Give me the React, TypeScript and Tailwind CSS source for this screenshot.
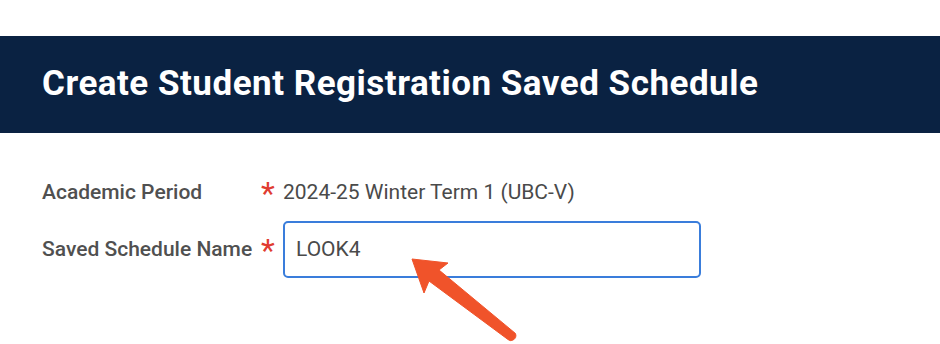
import React from "react";

export default function App() {
  return (
    <div className="relative w-[940px] h-[344px] bg-white overflow-hidden" style={{ fontFamily: "Roboto, 'Liberation Sans', sans-serif" }}>
      <div className="h-[36px]" />
      <div className="h-[97px] bg-[#0a2242] flex items-center pl-[42px]">
        <h1 className="text-white font-bold text-[35px] leading-none tracking-[0.5px] pb-[2px]">Create Student Registration Saved Schedule</h1>
      </div>
      <div className="pl-[42px] pt-[44px]">
        <div className="flex items-center h-[32px]">
          <div className="w-[219px] text-[21px] font-medium text-[#505050]">Academic Period</div>
          <div className="w-[22px] h-[32px] text-[32px] text-[#e03c31] leading-none pt-0">*</div>
          <div className="text-[21px] text-[#4a4a4a]">2024-25 Winter Term 1 (UBC-V)</div>
        </div>
        <div className="flex items-center mt-[12px]">
          <div className="w-[219px] text-[21px] font-medium text-[#505050]">Saved Schedule Name</div>
          <div className="w-[22px] h-[32px] text-[32px] text-[#e03c31] leading-none pt-0">*</div>
          <div className="w-[418px] h-[57px] border-2 border-[#3a7ddb] rounded-[5px] flex items-center pl-[11px] text-[21px] text-[#4a4a4a]">LOOK4</div>
        </div>
      </div>
      <svg className="absolute left-0 top-0" width="940" height="344" viewBox="0 0 940 344">
        <path
          d="M412 259 L448 263 L439 270 L515.5 333.5 Q517 338 513 340 Q510 341.5 508 339.5 L429 281 L424 293 Z"
          fill="#f0532a"
          stroke="#f0532a"
          strokeWidth="1"
          strokeLinejoin="round"
        />
      </svg>
    </div>
  );
}
